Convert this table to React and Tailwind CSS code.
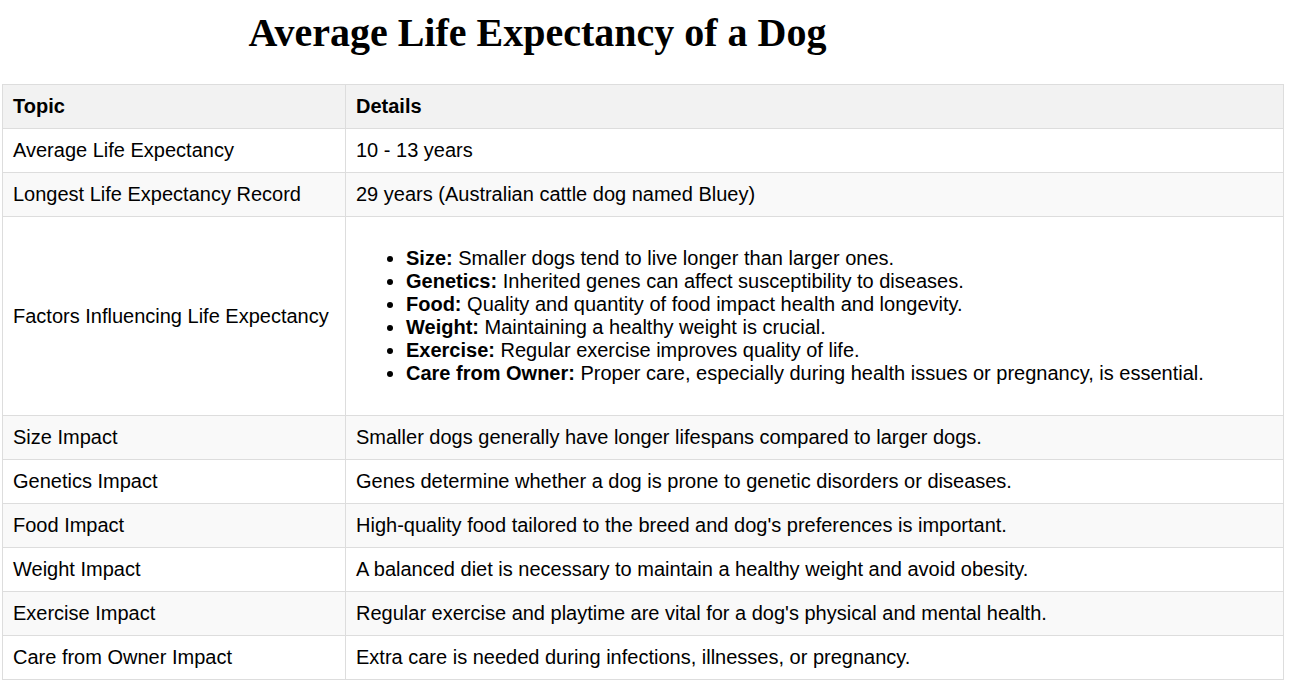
import React from 'react'

const rows = [
    { topic: 'Average Life Expectancy', details: '10 - 13 years' },
    { topic: 'Longest Life Expectancy Record', details: '29 years (Australian cattle dog named Bluey)' },
    { topic: 'Factors Influencing Life Expectancy', factors: true },
    { topic: 'Size Impact', details: 'Smaller dogs generally have longer lifespans compared to larger dogs.' },
    { topic: 'Genetics Impact', details: 'Genes determine whether a dog is prone to genetic disorders or diseases.' },
    { topic: 'Food Impact', details: "High-quality food tailored to the breed and dog's preferences is important." },
    { topic: 'Weight Impact', details: 'A balanced diet is necessary to maintain a healthy weight and avoid obesity.' },
    { topic: 'Exercise Impact', details: "Regular exercise and playtime are vital for a dog's physical and mental health." },
    { topic: 'Care from Owner Impact', details: 'Extra care is needed during infections, illnesses, or pregnancy.' },
]

const factors = [
    ['Size:', 'Smaller dogs tend to live longer than larger ones.'],
    ['Genetics:', 'Inherited genes can affect susceptibility to diseases.'],
    ['Food:', 'Quality and quantity of food impact health and longevity.'],
    ['Weight:', 'Maintaining a healthy weight is crucial.'],
    ['Exercise:', 'Regular exercise improves quality of life.'],
    ['Care from Owner:', 'Proper care, especially during health issues or pregnancy, is essential.'],
]

const App = () => {
    return (
        <div className="min-h-screen bg-white text-black text-[20px] leading-[23px] font-['Liberation_Sans',Arial,sans-serif] pt-[10px]">
            <h1 className="w-[1075px] text-center text-[40px] leading-[46px] font-bold font-['Liberation_Serif','Times_New_Roman',serif] mb-[28px]">
                Average Life Expectancy of a Dog
            </h1>
            <table className="ml-[2px] w-[1282px] table-fixed border-collapse">
                <colgroup>
                    <col className="w-[343px]" />
                    <col />
                </colgroup>
                <thead>
                    <tr className="bg-[#f2f2f2]">
                        <th className="border border-[#dddddd] px-[10px] py-[10px] text-left font-bold">Topic</th>
                        <th className="border border-[#dddddd] px-[10px] py-[10px] text-left font-bold">Details</th>
                    </tr>
                </thead>
                <tbody>
                    {rows.map((row, i) => (
                        <tr key={row.topic} className={i % 2 === 1 ? 'bg-[#f9f9f9]' : 'bg-white'}>
                            <td className="border border-[#dddddd] px-[10px] py-[10px] align-middle">{row.topic}</td>
                            <td className="border border-[#dddddd] px-[10px] py-[10px] align-middle">
                                {row.factors ? (
                                    <ul className="list-disc pl-[50px] my-[20px]">
                                        {factors.map(([k, v]) => (
                                            <li key={k}>
                                                <strong className="font-bold">{k}</strong> {v}
                                            </li>
                                        ))}
                                    </ul>
                                ) : (
                                    row.details
                                )}
                            </td>
                        </tr>
                    ))}
                </tbody>
            </table>
        </div>
    )
}

export default App
